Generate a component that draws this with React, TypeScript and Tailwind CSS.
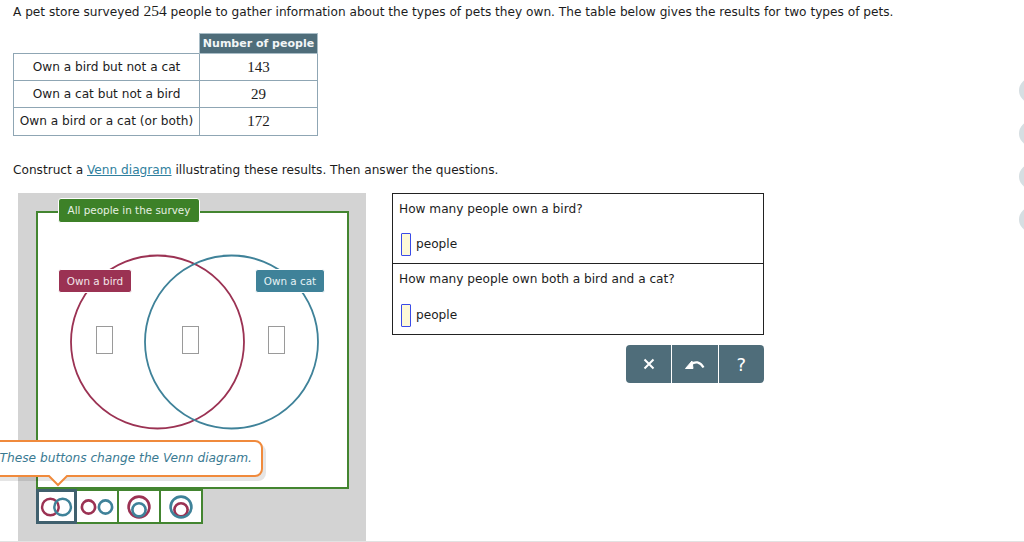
const rows = [
  {label: 'Own a bird but not a cat', value: '143', height: 'h-[27px]'},
  {label: 'Own a cat but not a bird', value: '29', height: 'h-[27px]'},
  {label: 'Own a bird or a cat (or both)', value: '172', height: 'h-[28px]'},
];

const questions = [
  {text: 'How many people own a bird?', top: 'pt-[7px] border-b border-[#222]', gap: 'mt-[16px]'},
  {text: 'How many people own both a bird and a cat?', top: 'pt-[7px]', gap: 'mt-[17px]'},
];

const BIRD = '#9b3253';
const CAT = '#3f8299';

const vennIcons = [
  {bird: [13, 18, 9.5], cat: [27, 18, 9.5]},
  {bird: [11, 18, 7], cat: [29, 18, 7]},
  {bird: [20, 18, 11], cat: [20, 21, 7]},
  {bird: [20, 21, 7], cat: [20, 18, 11]},
];

function VennButton({icon, active}: {icon: (typeof vennIcons)[number]; active: boolean}) {
  return (
    <div
      className={`flex items-center justify-center bg-white h-[35px] ${
        active ? 'w-[41px] border-[3px] border-[#40606e]' : 'w-[42px] border-r-2 border-b-2 border-t-2 border-[#438530]'
      }`}
    >
      <svg width="38" height="34" viewBox="0 0 40 36" fill="none" strokeWidth="2.8">
        <circle cx={icon.bird[0]} cy={icon.bird[1]} r={icon.bird[2]} stroke={BIRD} />
        <circle cx={icon.cat[0]} cy={icon.cat[1]} r={icon.cat[2]} stroke={CAT} />
      </svg>
    </div>
  );
}

function VennPanel() {
  return (
    <div className="relative w-[348px] h-[348px] bg-[#d3d3d3] shrink-0">
      <div className="absolute left-[18px] top-[18px] w-[313px] h-[278px] bg-white border-2 border-[#438530]">
        <svg className="absolute -left-[2px] -top-[2px]" width="313" height="278" viewBox="0 0 313 278" fill="none" strokeWidth="1.8">
          <circle cx="121.5" cy="131" r="86.5" stroke={BIRD} />
          <circle cx="195.5" cy="131" r="86.5" stroke={CAT} />
        </svg>
      </div>
      <div className="absolute left-[40px] top-[5px] h-[25px] w-[142px] flex items-center justify-center pt-px rounded-[3px] bg-[#3d8128] border border-white text-[#e6f0e2] text-[10.4px]">
        All people in the survey
      </div>
      <div className="absolute left-[40px] top-[76px] h-[24px] w-[74px] flex items-center justify-center pt-px rounded-[3px] bg-[#9b3253] border border-white text-[#f3e4e9] text-[10.4px]">
        Own a bird
      </div>
      <div className="absolute left-[237px] top-[76px] h-[24px] w-[70px] flex items-center justify-center pt-px rounded-[3px] bg-[#3f8299] border border-white text-[#e6f2f5] text-[10.4px]">
        Own a cat
      </div>
      <div className="absolute left-[78px] top-[133px] w-[17px] h-[28px] bg-white border border-[#9a9a9a]" />
      <div className="absolute left-[164px] top-[133px] w-[17px] h-[28px] bg-white border border-[#9a9a9a]" />
      <div className="absolute left-[250px] top-[133px] w-[17px] h-[28px] bg-white border border-[#9a9a9a]" />
      <div className="absolute left-[18px] top-[296px] flex">
        {vennIcons.map((icon, i) => (
          <VennButton key={i} icon={icon} active={i === 0} />
        ))}
      </div>
      {/* Hint bubble */}
      <div className="absolute -left-[30px] top-[247px] w-[275px] h-[37px] flex items-center justify-end pr-[9px] bg-white border-2 border-[#f08a3c] rounded-[8px] shadow-[3px_4px_0_rgba(0,0,0,0.1)] italic text-[12.2px] text-[#3a7a92] whitespace-nowrap">
        These buttons change the Venn diagram.
      </div>
      <svg className="absolute left-[29px] top-[282px]" width="22" height="12" viewBox="0 0 22 12">
        <path d="M1 0 L11 10 L21 0" fill="white" stroke="#f08a3c" strokeWidth="2" />
      </svg>
    </div>
  );
}

function Toolbar() {
  return (
    <div className="flex self-end h-[38px] w-[138px] mt-[10px] rounded-[4px] overflow-hidden bg-[#4f6d7a] divide-x divide-white text-white">
      <div className="flex-1 flex items-center justify-center">
        <svg width="12" height="12" viewBox="0 0 12 12" stroke="white" strokeWidth="2">
          <path d="M1.5 1.5 L10.5 10.5 M10.5 1.5 L1.5 10.5" />
        </svg>
      </div>
      <div className="flex-1 flex items-center justify-center">
        <svg width="20" height="11" viewBox="0 0 20 11" fill="none">
          <path d="M0.5 9.5 L7 2 L8 9.5 Z" fill="white" stroke="white" strokeWidth="1" />
          <path d="M6 5.5 C10 2 15 2.5 18.5 8.5" stroke="white" strokeWidth="2.2" />
        </svg>
      </div>
      <div className="flex-1 flex items-center justify-center text-[18px]">?</div>
    </div>
  );
}

export default function App() {
  return (
    <div className="relative w-[1024px] h-[542px] overflow-hidden bg-white text-[#1c1c1c] text-[12.15px] font-['DejaVu_Sans',Verdana,sans-serif]">
      <p className="pl-[13px] pt-[3px] h-[33px] leading-[16px] whitespace-nowrap">
        A pet store surveyed <span className="font-['Liberation_Serif',serif] text-[15.5px]">254</span> people to gather information about the types of pets they own. The table below gives the results for two types of pets.
      </p>

      <table className="ml-[13px] border-collapse text-center">
        <thead>
          <tr className="h-[20px]">
            <th className="w-[186px] p-0" />
            <th className="w-[118px] p-0 pt-px bg-[#4f6d7a] text-[#f2f5f6] font-bold text-[11px] border border-[#a9bdc7]">Number of people</th>
          </tr>
        </thead>
        <tbody>
          {rows.map((row) => (
            <tr key={row.label} className={row.height}>
              <td className="p-0 border border-[#8fa6b4] whitespace-nowrap">{row.label}</td>
              <td className="p-0 border border-[#8fa6b4] font-['Liberation_Serif',serif] text-[15px]">{row.value}</td>
            </tr>
          ))}
        </tbody>
      </table>

      <p className="pl-[13px] mt-[26px] leading-[16px] whitespace-nowrap">
        Construct a <span className="text-[#2f7f9e] underline">Venn diagram</span> illustrating these results. Then answer the questions.
      </p>

      <div className="flex ml-[18px] mt-[15px] gap-[26px]">
        <VennPanel />
        <div className="flex flex-col w-[372px]">
          <div className="border border-[#222] h-[142px]">
            {questions.map((q) => (
              <div key={q.text} className={`h-[70px] pl-[6px] ${q.top}`}>
                <div className="leading-[16px]">{q.text}</div>
                <div className={`flex items-center pl-[2px] gap-[5px] ${q.gap}`}>
                  <div className="w-[10px] h-[23px] bg-[#fdf9d8] border border-[#3a4be8] rounded-[1px]" />
                  <span>people</span>
                </div>
              </div>
            ))}
          </div>
          <Toolbar />
        </div>
      </div>

      {/* Cut-off side rail */}
      <div className="absolute left-[1019px] top-[78px] flex flex-col gap-[18px]">
        <div className="w-[25px] h-[25px] rounded-full bg-[#d6dee2]" />
        <div className="w-[25px] h-[25px] rounded-full bg-[#d6dee2]" />
        <div className="w-[25px] h-[25px] rounded-full bg-[#d6dee2]" />
        <div className="w-[25px] h-[25px] rounded-full bg-[#d6dee2]" />
      </div>

      <div className="absolute left-0 right-0 bottom-0 h-px bg-[#e2e2e2]" />
    </div>
  );
}
